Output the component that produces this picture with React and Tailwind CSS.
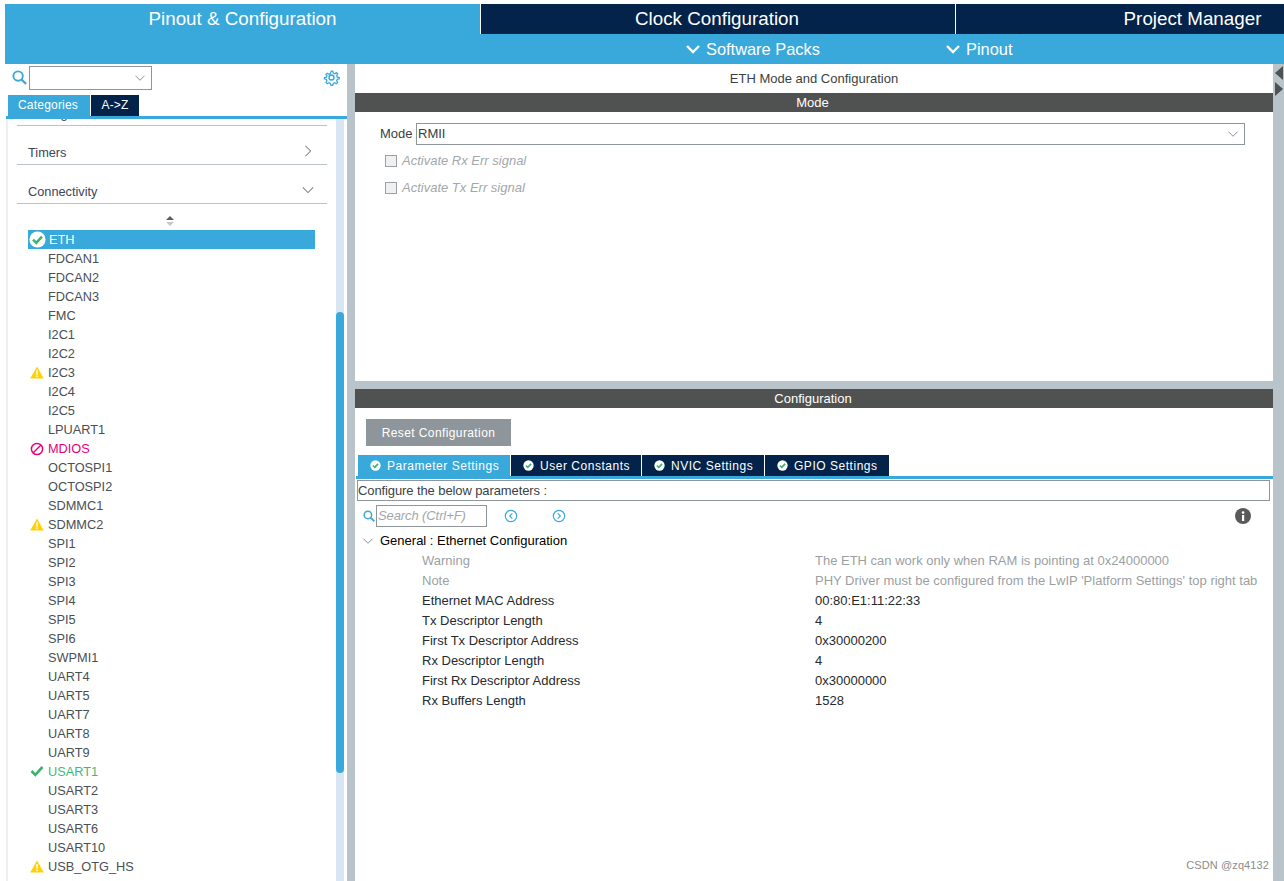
import React from "react";

const F = { fontFamily: '"Liberation Sans", Arial, sans-serif' };

const items = [
  ["FDCAN1"],["FDCAN2"],["FDCAN3"],["FMC"],["I2C1"],["I2C2"],["I2C3","warn"],["I2C4"],["I2C5"],["LPUART1"],["MDIOS","block"],
  ["OCTOSPI1"],["OCTOSPI2"],["SDMMC1"],["SDMMC2","warn"],["SPI1"],["SPI2"],["SPI3"],["SPI4"],["SPI5"],["SPI6"],["SWPMI1"],
  ["UART4"],["UART5"],["UART7"],["UART8"],["UART9"],["USART1","ok"],["USART2"],["USART3"],["USART6"],["USART10"],["USB_OTG_HS","warn"],
];

const params = [
  ["Warning","The ETH can work only when RAM is pointing at 0x24000000",true],
  ["Note","PHY Driver must be configured from the LwIP 'Platform Settings' top right tab",true],
  ["Ethernet MAC Address","00:80:E1:11:22:33"],
  ["Tx Descriptor Length","4"],
  ["First Tx Descriptor Address","0x30000200"],
  ["Rx Descriptor Length","4"],
  ["First Rx Descriptor Address","0x30000000"],
  ["Rx Buffers Length","1528"],
];

function Chevron({ dir = "down", className = "", color = "#7d858a", w = 1.2 }) {
  const d = dir === "down" ? "M2 5l6 6 6-6" : "M5 2l6 6-6 6";
  return (
    <svg viewBox="0 0 16 16" className={className} fill="none" stroke={color} strokeWidth={w}>
      <path d={d} />
    </svg>
  );
}

function Search({ className = "" }) {
  return (
    <svg viewBox="0 0 16 16" className={className} fill="none" stroke="#39a9dc" strokeWidth="2">
      <circle cx="6.5" cy="6.5" r="5" />
      <path d="M10.2 10.2L15 15" strokeWidth="2.4" />
    </svg>
  );
}

function Warn() {
  return (
    <svg viewBox="0 0 14 13" className="w-[14px] h-[13px]">
      <path d="M7 0.5L13.8 12.5H0.2Z" fill="#ffd200" />
      <rect x="6.3" y="4" width="1.4" height="4.8" fill="#fff" />
      <rect x="6.3" y="9.6" width="1.4" height="1.5" fill="#fff" />
    </svg>
  );
}

function Block() {
  return (
    <svg viewBox="0 0 14 14" className="w-[14px] h-[14px]" fill="none" stroke="#e6007e" strokeWidth="1.5">
      <circle cx="7" cy="7" r="5.6" />
      <path d="M3 11L11 3" />
    </svg>
  );
}

function Tick() {
  return (
    <svg viewBox="0 0 14 12" className="w-[14px] h-[12px]" fill="none" stroke="#3cb371" strokeWidth="2.6">
      <path d="M1.5 6l3.8 3.8L12.5 2" />
    </svg>
  );
}

function TabCheck() {
  return (
    <svg viewBox="0 0 12 12" className="w-[11px] h-[11px] shrink-0">
      <circle cx="6" cy="6" r="5.6" fill="#fff" />
      <path d="M3.2 6l2 2 3.6-3.8" fill="none" stroke="#3cb371" strokeWidth="1.8" />
    </svg>
  );
}

function Item({ name, state }) {
  const color = state === "ok" ? "text-[#3dbb7c]" : state === "block" ? "text-[#e6007e]" : "text-[#4a4f55]";
  return (
    <div className="h-[19px] flex items-center relative pl-[20px] w-[287px]">
      <span className="absolute left-[2px] top-[3px]">
        {state === "warn" && <Warn />}
        {state === "block" && <Block />}
        {state === "ok" && <Tick />}
      </span>
      <span className={`text-[12.75px] leading-[19px] ${color}`}>{name}</span>
    </div>
  );
}

function Category({ name, open }) {
  return (
    <div className="h-[39px] mx-[9px] w-[310px] border-b border-[#b9c4ca] flex items-end justify-between pb-[3px] pl-[11px] pr-[12px]">
      <span className="text-[12.75px] leading-[16px] text-[#3a4560]">{name}</span>
      <Chevron dir={open ? "down" : "right"} className="w-[14px] h-[14px] mb-[3px]" />
    </div>
  );
}

function CfgTab({ label, active, w }) {
  return (
    <div className={`h-[21px] flex items-center gap-[6px] pl-[12px] text-white text-[12px] tracking-[0.53px] ${active ? "bg-[#39a9dc]" : "bg-[#03234b]"} ${w}`}>
      <TabCheck />
      <span>{label}</span>
    </div>
  );
}

function Round({ dir }) {
  return (
    <svg viewBox="0 0 16 16" className="w-[14px] h-[14px]" fill="none" stroke="#39a9dc" strokeWidth="1.3">
      <circle cx="8" cy="8" r="6.5" />
      <path d={dir === "l" ? "M9.5 5L6.5 8l3 3" : "M6.5 5l3 3-3 3"} />
    </svg>
  );
}

export default function App() {
  return (
    <div className="w-[1284px] h-[881px] overflow-hidden bg-white pl-[5px] pt-[4px] flex flex-col" style={F}>
      <header className="h-[60px] shrink-0 bg-[#39a9dc] text-white flex flex-col">
        <div className="h-[30px] flex overflow-hidden bg-white">
          <div className="w-[475px] shrink-0 bg-[#39a9dc] text-center text-[18.8px] leading-[30px]">Pinout &amp; Configuration</div>
          <div className="w-[474px] ml-px shrink-0 bg-[#03234b] text-center text-[18.8px] leading-[30px] pr-[2px]">Clock Configuration</div>
          <div className="w-[475px] ml-px shrink-0 bg-[#03234b] text-center text-[18.8px] leading-[30px] pr-[2px]">Project Manager</div>
        </div>
        <div className="h-[30px] flex items-center text-[16.4px] pl-[680px]">
          <Chevron className="w-[16px] h-[16px]" color="#fff" w={2.4} />
          <span className="ml-[5px] w-[239px]">Software Packs</span>
          <Chevron className="w-[16px] h-[16px]" color="#fff" w={2.4} />
          <span className="ml-[5px]">Pinout</span>
        </div>
      </header>

      <div className="flex-1 flex min-h-0">
        <aside className="w-[342px] shrink-0 flex flex-col min-h-0 bg-white">
          <div className="h-[31px] shrink-0 relative flex items-start pt-[2px] pl-[7px]">
            <Search className="w-[15px] h-[15px] mt-[4px]" />
            <div className="ml-[2px] w-[123px] h-[24px] border border-[#8f969b] flex items-center justify-end pr-[5px]">
              <Chevron className="w-[12px] h-[12px]" />
            </div>
            <svg viewBox="0 0 24 24" className="w-[17px] h-[17px] ml-[171px] mt-[3px]" fill="none" stroke="#39a9dc" strokeWidth="2">
              <circle cx="12" cy="12" r="3.5" />
              <path d="M12 2l2 0 .7 3 2.4 1 2.6-1.6 2 2-1.6 2.6 1 2.4 3 .7v2l-3 .7-1 2.4 1.6 2.6-2 2-2.6-1.6-2.4 1-.7 3h-3l-.7-3-2.4-1-2.6 1.6-2-2 1.6-2.6-1-2.4-3-.7v-2l3-.7 1-2.4L3.3 7.4l2-2 2.6 1.6 2.4-1 .7-3z" transform="translate(1.2 1.2) scale(0.9)" />
            </svg>
          </div>
          <div className="h-[21px] shrink-0 flex gap-px pl-[3px] text-white text-[12px] tracking-[0.2px] leading-[21px]">
            <div className="w-[82px] text-center bg-[#39a9dc] pr-[2px]">Categories</div>
            <div className="w-[48px] text-center bg-[#03234b]">A-&gt;Z</div>
          </div>
          <div className="h-[3px] shrink-0 ml-[1px] bg-[#39a9dc]" />
          <div className="flex-1 min-h-0 flex ml-[1px] border-l-2 border-[#f0f0f0]">
            <div className="w-[328px] shrink-0 overflow-hidden">
              <div className="-mt-[32px]">
                <Category name="Analog" open={false} />
                <Category name="Timers" />
                <Category name="Connectivity" open />
                <div className="h-[25px] flex justify-center items-center pr-[4px] pt-[8px]">
                  <svg viewBox="0 0 8 10" className="w-[8px] h-[10px]">
                    <path d="M4 0L8 4H0Z" fill="#5a5f63" />
                    <path d="M4 10L0 6H8Z" fill="#c4c8ca" />
                  </svg>
                </div>
                <div className="ml-[20px] pt-[1px]">
                  <div className="h-[19px] w-[287px] bg-[#39a9dc] flex items-center relative pl-[21px]">
                    <svg viewBox="0 0 16 16" className="absolute left-[1px] top-[1px] w-[17px] h-[17px]">
                      <circle cx="8" cy="8" r="7.6" fill="#fff" />
                      <path d="M3.8 8.2l3 3 5.4-6" fill="none" stroke="#3cb371" strokeWidth="2.4" />
                    </svg>
                    <span className="text-white text-[12.75px]">ETH</span>
                  </div>
                  {items.map(([n, s]) => <Item key={n} name={n} state={s} />)}
                </div>
              </div>
            </div>
            <div className="w-[8px] shrink-0 bg-[#d8e6f3] relative">
              <div className="absolute left-0 top-[193px] w-[8px] h-[461px] bg-[#39a9dc] rounded-[4px]" />
            </div>
          </div>
        </aside>

        <div className="w-[8px] shrink-0 bg-[#b9c4ca]" />

        <main className="w-[918px] shrink-0 flex flex-col min-h-0">
          <section className="h-[317px] shrink-0 flex flex-col">
            <div className="h-[29px] text-center text-[13px] leading-[29px] text-[#3a3f45]">ETH Mode and Configuration</div>
            <div className="h-[19px] bg-[#505251] text-white text-center text-[13px] leading-[19px] pr-[3px]">Mode</div>
            <div className="mt-[11px] pl-[25px] flex items-center h-[22px]">
              <span className="text-[13px] text-[#3a3f45] w-[36px]">Mode</span>
              <div className="w-[829px] h-[22px] border border-[#8f969b] flex items-center justify-between pl-[1px] pr-[5px] text-[13px] text-[#3a3f45]">
                RMII
                <Chevron className="w-[12px] h-[12px]" />
              </div>
            </div>
            <div className="mt-[2px] ml-[30px] h-[27px] flex items-center gap-[5px]">
              <div className="w-[12px] h-[12px] bg-[#f0f0f0] border border-[#9aa1a6]" />
              <span className="italic text-[13px] text-[#a3a7aa]">Activate Rx Err signal</span>
            </div>
            <div className="ml-[30px] h-[27px] flex items-center gap-[5px]">
              <div className="w-[12px] h-[12px] bg-[#f0f0f0] border border-[#9aa1a6]" />
              <span className="italic text-[13px] text-[#a3a7aa]">Activate Tx Err signal</span>
            </div>
          </section>

          <div className="h-[8px] shrink-0 bg-[#b9c4ca]" />

          <section className="flex-1 min-h-0 flex flex-col relative">
            <div className="h-[19px] bg-[#505251] text-white text-center text-[13px] leading-[19px] pr-[2px]">Configuration</div>
            <div className="mt-[11px] ml-[11px] w-[145px] h-[27px] bg-[#8f969b] text-white text-[12px] tracking-[0.4px] text-center leading-[28px]">Reset Configuration</div>
            <div className="mt-[9px] ml-[3px] flex gap-px">
              <CfgTab label="Parameter Settings" active w="w-[152px]" />
              <CfgTab label="User Constants" w="w-[130px]" />
              <CfgTab label="NVIC Settings" w="w-[122px]" />
              <CfgTab label="GPIO Settings" w="w-[124px]" />
            </div>
            <div className="h-[3px] ml-[1px] bg-[#39a9dc]" />
            <div className="mt-px ml-[2px] w-[913px] h-[21px] border border-[#8f969b] text-[13px] tracking-[-0.1px] leading-[19px] text-[#3a3f45]">Configure the below parameters :</div>
            <div className="mt-[4px] h-[22px] flex items-center pl-[8px] relative">
              <Search className="w-[12px] h-[12px]" />
              <div className="ml-px w-[111px] h-[22px] border border-[#8f969b] italic text-[13px] tracking-[-0.1px] leading-[20px] pl-[1px] text-[#a3a7aa]">Search (Ctrl+F)</div>
              <span className="ml-[17px]"><Round dir="l" /></span>
              <span className="ml-[34px]"><Round dir="r" /></span>
              <svg viewBox="0 0 16 16" className="absolute left-[880px] top-[3px] w-[16px] h-[16px]">
                <circle cx="8" cy="8" r="8" fill="#5a5a5a" />
                <rect x="7" y="7" width="2.2" height="6" fill="#fff" />
                <circle cx="8.1" cy="4.6" r="1.3" fill="#fff" />
              </svg>
            </div>
            <div className="mt-[4px] h-[20px] flex items-center pl-[7px] text-[13px] text-black">
              <Chevron className="w-[12px] h-[12px]" />
              <span className="ml-[6px]">General : Ethernet Configuration</span>
            </div>
            <div>
              {params.map(([k, v, muted]) => (
                <div key={k} className={`h-[20px] flex items-center text-[13px] pl-[67px] ${muted ? "text-[#9b9fa3]" : "text-[#26292d]"}`}>
                  <span className="w-[393px] shrink-0">{k}</span>
                  <span>{v}</span>
                </div>
              ))}
            </div>
            <div className="absolute right-[4px] bottom-[8px] text-[11px] tracking-[0.1px] text-[#8c8c8c]">CSDN @zq4132</div>
          </section>
        </main>

        <div className="flex-1 bg-[#b9c4ca] flex flex-col gap-[2px] pt-[2px] pl-[1px]">
          <svg viewBox="0 0 10 14" className="w-[10px] h-[14px]"><path d="M9 0V14L1 7Z" fill="#505251" /></svg>
          <svg viewBox="0 0 10 14" className="w-[10px] h-[14px]"><path d="M1 0V14L9 7Z" fill="#505251" /></svg>
        </div>
      </div>
    </div>
  );
}
